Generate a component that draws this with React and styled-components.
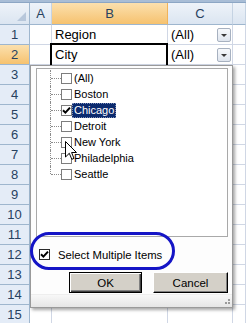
import React from "react";
import styled, { createGlobalStyle, css } from "styled-components";

const Global = createGlobalStyle`
  html, body { margin: 0; padding: 0; background: #fff; }
  body { overflow: hidden; }
`;

const Sheet = styled.div`
  position: relative;
  width: 246px;
  height: 323px;
  overflow: hidden;
  background: #fff;
  font-family: "Liberation Sans", Arial, sans-serif;
`;

const TopStrip = styled.div`
  height: 2px;
  background: #a8bdd6;
  border-bottom: 1px solid #8ca6c4;
`;

const Grid = styled.div`
  display: grid;
  grid-template-columns: 30px 22px 116px 65px 1fr;
  grid-template-rows: 22px;
  grid-auto-rows: 20px;
`;

const orange = css`
  background: linear-gradient(#fbe0ae, #f6c26f);
`;

const Corner = styled.div`
  position: relative;
  background: linear-gradient(#eef3f9, #dbe5f1);
  border-right: 1px solid #9eb6ce;
  border-bottom: 1px solid #9eb6ce;
  &::after {
    content: "";
    position: absolute;
    right: 3px;
    bottom: 3px;
    border-style: solid;
    border-width: 0 0 9px 9px;
    border-color: transparent transparent #b7c7db transparent;
  }
`;

const ColHead = styled.div`
  display: flex;
  align-items: flex-end;
  justify-content: center;
  padding-bottom: 3px;
  box-sizing: border-box;
  font-size: 13px;
  color: #27415f;
  border-right: 1px solid ${(p) => (p.$active ? "#f0b35a" : "#c5d3e3")};
  border-bottom: 1px solid #9eb6ce;
  background: linear-gradient(#eef3f9, #dbe5f1);
  ${(p) => p.$active && orange}
`;

const RowHead = styled.div`
  display: flex;
  align-items: flex-end;
  justify-content: center;
  padding-bottom: 2px;
  box-sizing: border-box;
  font-size: 13px;
  color: #27415f;
  background: #e4ecf7;
  border-right: 1px solid #9eb6ce;
  border-bottom: 1px solid #9eb6ce;
  ${(p) => p.$active && orange}
`;

const Cell = styled.div`
  position: relative;
  display: flex;
  align-items: flex-end;
  justify-content: space-between;
  box-sizing: border-box;
  padding: 0 1px 1px 3px;
  font-size: 13px;
  line-height: 16px;
  color: #000;
  border-right: 1px solid #d0d7e5;
  border-bottom: 1px solid #d0d7e5;
  ${(p) =>
    p.$selected &&
    css`
      &::after {
        content: "";
        position: absolute;
        left: -2px;
        top: -2px;
        right: -1px;
        bottom: -4px;
        border: 2px solid #000;
        pointer-events: none;
      }
    `}
`;

const DropBtn = styled.span`
  display: flex;
  align-items: center;
  justify-content: center;
  width: 14px;
  height: 14px;
  box-sizing: border-box;
  margin-bottom: 1px;
  border: 1px solid #a7b1c0;
  border-radius: 2px;
  background: linear-gradient(#f7f9fc, #dfe5ee);
  &::before {
    content: "";
    border-style: solid;
    border-width: 3px 3px 0 3px;
    border-color: #3b3b3b transparent transparent transparent;
  }
`;

const Panel = styled.div`
  position: absolute;
  left: 30px;
  top: 65px;
  width: 203px;
  height: 243px;
  box-sizing: border-box;
  display: flex;
  flex-direction: column;
  padding: 2px 4px 0 5px;
  background: #fdfdfd;
  border: 1px solid #9a9a9a;
  box-shadow: 2px 2px 3px rgba(0, 0, 0, 0.35);
`;

const ListBox = styled.div`
  height: 169px;
  box-sizing: border-box;
  padding-top: 1px;
  background: #fff;
  border: 1px solid #a9a9a9;
`;

const TreeRow = styled.div`
  display: flex;
  align-items: center;
  height: 16px;
  font-size: 11px;
`;

const Branch = styled.span`
  position: relative;
  align-self: stretch;
  width: 11px;
  margin-left: 13px;
  &::before {
    content: "";
    position: absolute;
    left: 0;
    top: 0;
    height: ${(p) => (p.$last ? "8px" : "16px")};
    border-left: 1px dotted #8c8c8c;
  }
  &::after {
    content: "";
    position: absolute;
    left: 1px;
    top: 8px;
    width: 10px;
    border-top: 1px dotted #8c8c8c;
  }
`;

const Box = styled.span`
  display: flex;
  align-items: center;
  justify-content: center;
  width: 11px;
  height: 11px;
  box-sizing: border-box;
  background: #fff;
  border: 1px solid ${(p) => (p.$dark ? "#2a2a2a" : "#7d7d7d")};
`;

const ItemLabel = styled.span`
  padding: 0 2px;
  line-height: 15px;
  color: ${(p) => (p.$hl ? "#fff" : "#000")};
  background: ${(p) => (p.$hl ? "#0b2a6e" : "transparent")};
  outline: ${(p) => (p.$hl ? "1px dotted #7f8fb8" : "none")};
  outline-offset: -1px;
`;

const MultiRow = styled.div`
  display: flex;
  align-items: center;
  height: 13px;
  margin-top: 11px;
  padding-left: 3px;
  gap: 8px;
  font-size: 11.3px;
  color: #000;
`;

const ButtonRow = styled.div`
  display: flex;
  justify-content: flex-end;
  gap: 11px;
  margin-top: 11px;
`;

const Button = styled.div`
  display: flex;
  align-items: center;
  justify-content: center;
  width: ${(p) => p.$w}px;
  height: 21px;
  box-sizing: border-box;
  font-size: 11.5px;
  color: #000;
  background: #d4d0c8;
  border: 1px solid;
  border-color: ${(p) => (p.$default ? "#000" : "#fff #000 #000 #fff")};
  box-shadow: ${(p) =>
    p.$default
      ? "inset 1px 1px #fff, inset -1px -1px #404040, inset -2px -2px #808080"
      : "inset -1px -1px #808080"};
`;

const GripBar = styled.div`
  display: flex;
  justify-content: flex-end;
  align-items: flex-end;
  height: 10px;
  margin: auto -4px 0 -5px;
  padding: 0 2px 2px 0;
  background: linear-gradient(#f8f8f8, #e6e6e6);
  border-top: 1px solid #eeeeee;
`;

const Ellipse = styled.div`
  position: absolute;
  left: 30px;
  top: 232px;
  width: 145px;
  height: 38px;
  box-sizing: border-box;
  border: 3px solid #1515c6;
  border-radius: 19px;
  pointer-events: none;
`;

const Cursor = styled.svg`
  position: absolute;
  left: 65px;
  top: 141px;
`;

const Check = ({ size = 9 }) => (
  <svg width={size} height={size} viewBox="0 0 9 9">
    <path d="M1 4.2 L3.4 6.6 L8 1.6" fill="none" stroke="#000" strokeWidth="2" />
  </svg>
);

const items = ["(All)", "Boston", "Chicago", "Detroit", "New York", "Philadelphia", "Seattle"];

export default function App() {
  const rows = [];
  for (let r = 1; r <= 15; r++) {
    rows.push(
      <React.Fragment key={r}>
        <RowHead $active={r === 2}>{r}</RowHead>
        <Cell />
        <Cell $selected={r === 2}>{r === 1 ? "Region" : r === 2 ? "City" : ""}</Cell>
        <Cell>
          {r <= 2 && (
            <>
              <span>(All)</span>
              <DropBtn />
            </>
          )}
        </Cell>
        <Cell />
      </React.Fragment>
    );
  }

  return (
    <Sheet>
      <Global />
      <TopStrip />
      <Grid>
        <Corner />
        <ColHead>A</ColHead>
        <ColHead $active>B</ColHead>
        <ColHead>C</ColHead>
        <ColHead />
        {rows}
      </Grid>

      <Panel>
        <ListBox>
          {items.map((name, i) => (
            <TreeRow key={name}>
              <Branch $last={i === items.length - 1} />
              <Box>{name === "Chicago" && <Check />}</Box>
              <ItemLabel $hl={name === "Chicago"}>{name}</ItemLabel>
            </TreeRow>
          ))}
        </ListBox>
        <MultiRow>
          <Box $dark>
            <Check />
          </Box>
          <span>Select Multiple Items</span>
        </MultiRow>
        <ButtonRow>
          <Button $w={73} $default>OK</Button>
          <Button $w={75}>Cancel</Button>
        </ButtonRow>
        <GripBar>
          <svg width="7" height="7" viewBox="0 0 7 7">
            <rect x="5" y="1" width="2" height="2" fill="#9a9a9a" />
            <rect x="2" y="4" width="2" height="2" fill="#9a9a9a" />
            <rect x="5" y="4" width="2" height="2" fill="#9a9a9a" />
          </svg>
        </GripBar>
      </Panel>

      <Ellipse />
      <Cursor width="13" height="20" viewBox="0 0 13 20">
        <path
          d="M0.5 0.5 L0.5 16 L4.3 12.3 L6.8 18.3 L9 17.4 L6.6 11.5 L11.5 11.5 Z"
          fill="#fff"
          stroke="#000"
          strokeWidth="1"
          strokeLinejoin="miter"
        />
      </Cursor>
    </Sheet>
  );
}
